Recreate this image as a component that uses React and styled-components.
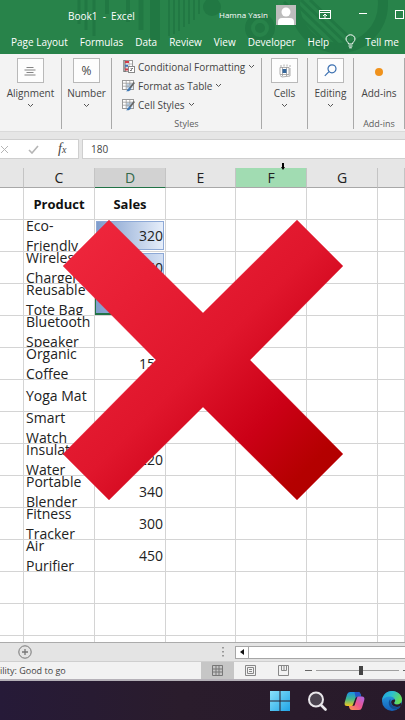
import React from "react";
import styled, { createGlobalStyle, css } from "styled-components";

const GlobalStyle = createGlobalStyle`
  * { box-sizing: border-box; }
  body { margin: 0; background: #281c2c; }
  button, input { font: inherit; color: inherit; }
  button { border: 0; padding: 0; background: none; cursor: pointer; }
  svg { display: block; flex: none; }
`;

const Page = styled.div`
  position: relative;
  display: flex;
  flex-direction: column;
  min-height: 100vh;
  overflow: hidden;
  font-family: "Open Sans", "Noto Sans", sans-serif;
  font-size: 10px;
  color: #444;
  background: #e6e6e6;
`;

/* ---------- green header ---------- */
const Header = styled.header`
  position: relative;
  background: #28834a;
  color: #fff;
`;

const Pattern = styled.svg`
  position: absolute;
  inset: 0;
`;

const TitleBar = styled.div`
  position: relative;
  display: flex;
  align-items: center;
  height: 29px;
  padding-left: 68px;
  overflow: hidden;
`;

const BookTitle = styled.h1`
  margin: 0;
  width: 151px;
  flex: none;
  font-size: 10px;
  font-weight: 400;
  line-height: 16px;
  padding-top: 2px;
  white-space: pre;
`;

const Account = styled.button`
  display: flex;
  align-items: center;
  justify-content: space-between;
  flex: none;
  width: 77px;
  font-size: 8px;
  white-space: nowrap;
`;

const WindowButtons = styled.div`
  display: flex;
  flex: none;
  gap: 25px;
  padding-left: 21px;
`;

const Tabs = styled.nav`
  position: relative;
  display: flex;
  align-items: center;
  gap: 12px;
  height: 25px;
  padding: 0 0 0 11px;
`;

const Tab = styled.button`
  display: flex;
  align-items: center;
  flex: none;
  gap: 9px;
  line-height: 16px;
  white-space: nowrap;
  &:last-child { padding-left: 4px; }
`;

/* ---------- ribbon ---------- */
const Ribbon = styled.section`
  display: flex;
  height: 78px;
  padding: 4px 0 2px;
  background: #f3f3f3;
  border-bottom: 1px solid #dadada;
  overflow: hidden;
`;

const Group = styled.div`
  position: relative;
  display: flex;
  flex-direction: column;
  align-items: center;
  flex: none;
  width: ${(p) => p.$width}px;
  border-right: 1px solid #a9a9a9;
`;

const GroupButton = styled.button`
  display: flex;
  flex-direction: column;
  align-items: center;
  gap: 3px;
  font-size: 10px;
  line-height: 14px;
  white-space: nowrap;
`;

const IconBox = styled.span`
  display: grid;
  place-items: center;
  width: 27px;
  height: 25px;
  border: 1px solid ${(p) => (p.$plain ? "transparent" : "#b9b9b9")};
  background: ${(p) => (p.$plain ? "transparent" : "#fdfdfd")};
  font-size: 12px;
`;

const StyleList = styled.div`
  display: flex;
  flex-direction: column;
  align-self: stretch;
  padding-left: 10px;
`;

const StyleButton = styled.button`
  display: flex;
  align-items: center;
  gap: 3px;
  height: 19px;
  padding-bottom: 2px;
  font-size: 10px;
  white-space: nowrap;
`;

const GroupName = styled.span`
  margin-top: auto;
  font-size: 9px;
  line-height: 10px;
  color: #5c5c5c;
`;

/* ---------- formula bar ---------- */
const FormulaBar = styled.div`
  display: flex;
  gap: 3px;
  height: 30px;
  padding: 7px 0 3px;
  background: #e6e6e6;
`;

const FormulaTools = styled.div`
  display: flex;
  align-items: center;
  gap: 19px;
  width: 79px;
  flex: none;
  background: #fff;
  border: 1px solid #cfcfcf;
  border-left: 0;
`;

const FunctionButton = styled.button`
  font-family: "Liberation Serif", serif;
  font-style: italic;
  font-size: 14px;
  line-height: 16px;
  small { font-size: 10px; }
`;

const FormulaInput = styled.input`
  flex: 1;
  min-width: 0;
  padding: 0 8px;
  border: 1px solid #cfcfcf;
  border-right: 0;
  outline: 0;
  background: #fff;
  font-size: 10px;
`;

/* ---------- sheet ---------- */
const SheetArea = styled.main`
  flex: 1;
  overflow: hidden;
  padding-top: 6px;
  background: linear-gradient(#e6e6e6 6px, #fff 6px);
  max-height: 480px;
`;

const Sheet = styled.table`
  width: 100%;
  table-layout: fixed;
  border-collapse: separate;
  border-spacing: 0;
  font-size: 14px;
  color: #222;
`;

const Col = styled.col`
  width: ${(p) => (p.$width ? p.$width + "px" : "auto")};
`;

const ColumnHead = styled.th`
  height: 20px;
  padding: 0;
  font-size: 14px;
  line-height: 18px;
  font-weight: 400;
  background: #e6e6e6;
  border-right: 1px solid #c4c4c4;
  border-bottom: 1px solid #a8a8a8;
  ${(p) => p.$state === "selected" && css`
    background: #d2d2d2;
    color: #33694a;
    border-bottom: 1px solid #217346;
  `}
  ${(p) => p.$state === "hover" && css`
    background: #a1dcb2;
  `}
`;

const Cell = styled.td`
  height: 32px;
  padding: 0;
  border-right: 1px solid #d4d4d4;
  border-bottom: 1px solid #d4d4d4;
  text-align: left;
`;

const CellBody = styled.div`
  display: flex;
  flex-direction: column;
  justify-content: center;
  height: 31px;
  padding: 0 2px;
  overflow: hidden;
  line-height: 20px;
  white-space: nowrap;
  ${(p) => p.$kind === "name" && css`align-items: flex-start;`}
  ${(p) => p.$kind === "number" && css`align-items: flex-end;`}
  ${(p) => p.$kind === "title" && css`
    align-items: center;
    font-size: 13px;
    font-weight: 700;
    color: #111;
  `}
  ${(p) => p.$bar && css`
    height: 29px;
    margin: 1px;
    padding: 0 0 0 1px;
    border: 1px solid #8ea9d6;
    background: linear-gradient(90deg, #7f9dcc, ${p.$bar});
  `}
  ${(p) => p.$last && css`
    height: 31px;
    margin: 0;
    border-left: 1px solid #217346;
    border-bottom: 2px solid #217346;
  `}
`;

/* ---------- footers ---------- */
const SheetTabs = styled.div`
  display: flex;
  align-items: center;
  height: 19px;
  padding-left: 18px;
  border-top: 1px solid #ababab;
  background: #e4e4e4;
`;

const ScrollArea = styled.div`
  display: flex;
  align-items: center;
  flex: 1;
  margin-left: 190px;
  gap: 11px;
`;

const ScrollBar = styled.div`
  display: flex;
  flex: 1;
  height: 13px;
  border: 1px solid #a6a6a6;
  border-right: 0;
  background: #fff;
`;

const ScrollButton = styled.button`
  display: grid;
  place-items: center;
  width: 13px;
  border-right: 1px solid #a6a6a6;
`;

const StatusBar = styled.div`
  display: flex;
  align-items: stretch;
  height: 20px;
  border-top: 1px solid #cfcfcf;
  border-bottom: 2px solid #b5b1b8;
  background: #f2f2f2;
  font-size: 9px;
`;

const StatusText = styled.span`
  flex: none;
  width: 201px;
  line-height: 18px;
  white-space: nowrap;
`;

const ViewButton = styled.button`
  display: grid;
  place-items: center;
  flex: none;
  width: 33px;
  background: ${(p) => (p.$active ? "#c6c6c6" : "transparent")};
`;

const ZoomControl = styled.div`
  display: flex;
  align-items: center;
  flex: 1;
  min-width: 0;
  gap: 4px;
  padding-left: 5px;
`;

const ZoomRange = styled.input`
  appearance: none;
  flex: 1;
  min-width: 0;
  height: 10px;
  margin: 0;
  background: linear-gradient(#a0a0a0, #a0a0a0) center / 100% 1px no-repeat;
  &::-webkit-slider-thumb {
    appearance: none;
    width: 4px;
    height: 9px;
    background: #444;
  }
`;

const Taskbar = styled.footer`
  display: flex;
  align-items: center;
  justify-content: flex-end;
  gap: 17px;
  height: 39px;
  padding-right: 3px;
  background: linear-gradient(90deg, #261a38, #2a1c2c 45%, #281a2a);
`;

const CrossOverlay = styled.div`
  position: absolute;
  inset: 0;
  display: grid;
  place-items: center;
  pointer-events: none;
`;

const PointerMark = styled.svg`
  position: absolute;
  right: 21px;
  top: -6px;
`;

const HeadInner = styled.div`
  position: relative;
`;

const Chevron = () => (
  <svg width="7" height="5" viewBox="0 0 7 5" fill="none" stroke="#555">
    <path d="M1 1l2.5 2.5L6 1" />
  </svg>
);

const TableIcon = ({ conditional }) => (
  <svg width="13" height="13" viewBox="0 0 13 13" fill="none">
    {conditional ? (
      <>
        <rect x="1.500" y=".5" width="9" height="11" fill="#fff" stroke="#999" />
        <path d="M7 .5v6M4 4h6.500M1.500 8h5" stroke="#aaa" strokeWidth=".8" />
        <path d="M3 .5v11.500" stroke="#666" strokeWidth="1.200" />
        <path d="M3 2h4M3 9.500h3" stroke="#d33c4a" strokeWidth="2" />
        <path d="M3 5.800h3" stroke="#4472b8" strokeWidth="2" />
        <rect x="6.500" y="6.500" width="6" height="6" fill="#fff" stroke="#888" />
        <path d="M8 11l3-3M8.500 8.500h2.500M8 10.500h2" stroke="#666" strokeWidth=".7" />
      </>
    ) : (
      <>
        <rect x=".5" y="1.500" width="11" height="9" fill="#fff" stroke="#999" />
        <path d="M4.500 4.500h6v5h-6z" fill="#b9cfe4" />
        <path d="M.5 4.200h11M.5 7.200h7M4.200 1.500v9M7.800 1.500v5" stroke="#999" strokeWidth=".8" />
        <path d="M12.300 3.500L7.500 9.500" stroke="#666" strokeWidth="1.800" />
        <path d="M7.500 8.500L9 10c-1 2.500-3 2.500-5 2.200 1.500-.7 1.500-2.700 3.500-3.700z" fill="#3e78b5" />
      </>
    )}
  </svg>
);

const columns = [
  { letter: "" },
  { letter: "C" },
  { letter: "D", state: "selected" },
  { letter: "E" },
  { letter: "F", state: "hover" },
  { letter: "G" },
  { letter: "" },
];

const rows = [
  { lines: ["Eco-", "Friendly"], sales: 320, bar: "#e6eefa" },
  { lines: ["Wireless", "Charger"], sales: 250, bar: "#d3e0f4" },
  { lines: ["Reusable", "Tote Bag"], sales: 180, bar: "#c0d0ec", last: true },
  { lines: ["Bluetooth", "Speaker"] },
  { lines: ["Organic", "Coffee"], sales: 150 },
  { lines: ["Yoga Mat"] },
  { lines: ["Smart", "Watch"] },
  { lines: ["Insulated", "Water"], sales: 220 },
  { lines: ["Portable", "Blender"], sales: 340 },
  { lines: ["Fitness", "Tracker"], sales: 300 },
  { lines: ["Air", "Purifier"], sales: 450 },
  { lines: [] },
  { lines: [] },
  { lines: [] },
];

const tabs = ["Page Layout", "Formulas", "Data", "Review", "View", "Developer", "Help"];

function TitleHeader() {
  return (
    <Header>
      <Pattern width="100%" height="54" aria-hidden="true">
        <g fill="none" stroke="#217843">
          <path d="M79 0v24M86 0v30M94 0v36" strokeWidth="3" />
          <path d="M107 0v14M128 0v22" strokeWidth="4" />
          <path d="M141 0v30" strokeWidth="5" />
          <path d="M155 0v40" strokeWidth="10" />
          <path d="M169 0v36M174 0v34M179 0v31M184 0v27M189 0v24M194 0v20M199 0v14" strokeWidth="2" />
          <circle cx="260" cy="28" r="12" strokeWidth="6" />
          <circle cx="339" cy="4" r="44" strokeWidth="10" />
          <path d="M292 0l52 50M301 0l46 44M310 0l40 38M284 2l50 48" strokeWidth="3" />
        </g>
        <circle cx="212" cy="7" r="9" fill="#217843" />
        <circle cx="260" cy="28" r="5" fill="#217843" />
      </Pattern>
      <TitleBar>
        <BookTitle>{"Book1  -  Excel"}</BookTitle>
        <Account>
          Hamna Yasin
          <svg width="20" height="20" viewBox="0 0 20 20">
            <rect width="20" height="20" fill="#bdbdbd" />
            <circle cx="10" cy="7" r="4.500" fill="#fff" />
            <path d="M2 20v-3q0-4 4-4h8q4 0 4 4v3z" fill="#fff" />
          </svg>
        </Account>
        <WindowButtons>
          <button aria-label="Ribbon display options">
            <svg width="16" height="12" viewBox="0 0 16 12" fill="none" stroke="#fff">
              <rect x="2.500" y="1.500" width="11" height="8" />
              <path d="M2.500 3.500h11M8 9V5M6 7l2-2 2 2" />
            </svg>
          </button>
          <button aria-label="Minimize">
            <svg width="10" height="12" viewBox="0 0 10 12" stroke="#fff">
              <path d="M1 4.500h8" />
            </svg>
          </button>
          <button aria-label="Maximize">
            <svg width="12" height="12" viewBox="0 0 12 12" fill="none" stroke="#fff">
              <rect x="2.500" y="1.500" width="8" height="8" />
            </svg>
          </button>
        </WindowButtons>
      </TitleBar>
      <Tabs>
        {tabs.map((t) => (
          <Tab key={t}>{t}</Tab>
        ))}
        <Tab>
          <svg width="11" height="15" viewBox="0 0 11 15" fill="none" stroke="#fff">
            <path d="M3.500 10C3.500 8 1 7.500 1 5a4.500 4.200 0 0 1 9 0c0 2.500-2.500 3-2.500 5zM3.500 12h4M4.200 13.800h2.600" />
          </svg>
          Tell me
        </Tab>
      </Tabs>
    </Header>
  );
}

function RibbonGroup({ width, label, icon }) {
  return (
    <Group $width={width}>
      <GroupButton>
        <IconBox>{icon}</IconBox>
        {label}
        <Chevron />
      </GroupButton>
    </Group>
  );
}

function RibbonPanel() {
  return (
    <Ribbon>
      <RibbonGroup
        width={62}
        label="Alignment"
        icon={
          <svg width="12" height="10" viewBox="0 0 12 10" stroke="#777">
            <path d="M2.500 1.500h7M.5 4h11M2.500 6.500h7M.5 9h11" strokeWidth=".9" />
          </svg>
        }
      />
      <RibbonGroup width={50} label="Number" icon="%" />
      <Group $width={150}>
        <StyleList>
          <StyleButton><TableIcon conditional />Conditional Formatting<Chevron /></StyleButton>
          <StyleButton><TableIcon />Format as Table<Chevron /></StyleButton>
          <StyleButton><TableIcon />Cell Styles<Chevron /></StyleButton>
        </StyleList>
        <GroupName>Styles</GroupName>
      </Group>
      <RibbonGroup
        width={46}
        label="Cells"
        icon={
          <svg width="14" height="14" viewBox="0 0 14 14" fill="none">
            <path d="M2 3.500h9v7H2zM4.500 3v9M8.500 3v9M2 11.500l2 1.500 8-1V4M3 1v2M6 .5v2M9 .5v2M12 1v2" stroke="#999" strokeWidth=".8" />
            <rect x="4.500" y="5" width="4" height="4" fill="#35679c" />
          </svg>
        }
      />
      <RibbonGroup
        width={46}
        label="Editing"
        icon={
          <svg width="13" height="13" viewBox="0 0 13 13" fill="none" stroke="#3a6fb0" strokeWidth="1.200">
            <circle cx="8" cy="4.800" r="4" />
            <path d="M5 7.600L.8 11.800" />
          </svg>
        }
      />
      <Group $width={51}>
        <GroupButton>
          <IconBox $plain>
            <svg width="10" height="10" viewBox="0 0 10 10">
              <circle cx="5" cy="6" r="4" fill="#f0921c" />
            </svg>
          </IconBox>
          Add-ins
        </GroupButton>
        <GroupName>Add-ins</GroupName>
      </Group>
    </Ribbon>
  );
}

function Grid() {
  return (
    <SheetArea>
      <Sheet>
        <colgroup>
          <Col $width={24} />
          <Col $width={71} />
          <Col $width={71} />
          <Col $width={70} />
          <Col $width={71} />
          <Col $width={71} />
          <Col />
        </colgroup>
        <thead>
          <tr>
            {columns.map((c, i) => (
              <ColumnHead key={i} $state={c.state} scope="col">
                <HeadInner>
                  {c.letter}
                  {c.state === "hover" && (
                    <PointerMark width="4" height="7" viewBox="0 0 4 7" aria-hidden="true">
                      <path d="M1 0h2v4h1L2 7 0 4h1z" fill="#000" />
                    </PointerMark>
                  )}
                </HeadInner>
              </ColumnHead>
            ))}
          </tr>
        </thead>
        <tbody>
          <tr>
            <Cell />
            <Cell as="th" scope="col"><CellBody $kind="title">Product</CellBody></Cell>
            <Cell as="th" scope="col"><CellBody $kind="title">Sales</CellBody></Cell>
            <Cell /><Cell /><Cell /><Cell />
          </tr>
          {rows.map((r, i) => (
            <tr key={i}>
              <Cell />
              <Cell>
                <CellBody $kind="name">
                  {r.lines.map((l) => <span key={l}>{l}</span>)}
                </CellBody>
              </Cell>
              <Cell>
                <CellBody $kind="number" $bar={r.bar} $last={r.last}>{r.sales && <span>{r.sales}</span>}</CellBody>
              </Cell>
              <Cell /><Cell /><Cell /><Cell />
            </tr>
          ))}
        </tbody>
      </Sheet>
    </SheetArea>
  );
}

function BottomBars() {
  return (
    <>
      <SheetTabs>
        <button aria-label="New sheet">
          <svg width="14" height="14" viewBox="0 0 14 14" fill="none" stroke="#777">
            <circle cx="7" cy="7" r="6.200" />
            <path d="M7 4v6M4 7h6" strokeWidth="1.300" />
          </svg>
        </button>
        <ScrollArea>
          <svg width="2" height="10" viewBox="0 0 2 10" fill="#999">
            <path d="M0 0h2v1.500H0zM0 4h2v1.500H0zM0 8h2v1.500H0z" />
          </svg>
          <ScrollBar>
            <ScrollButton aria-label="Scroll left">
              <svg width="4" height="6" viewBox="0 0 4 6"><path d="M4 0v6L0 3z" fill="#111" /></svg>
            </ScrollButton>
          </ScrollBar>
        </ScrollArea>
      </SheetTabs>
      <StatusBar>
        <StatusText>ility: Good to go</StatusText>
        <ViewButton $active aria-label="Normal view">
          <svg width="11" height="11" viewBox="0 0 11 11" fill="none" stroke="#777">
            <path d="M.5.5h10v10H.5zM.5 4h10M.5 7h10M4 .5v10M7 .5v10" />
          </svg>
        </ViewButton>
        <ViewButton aria-label="Page layout view">
          <svg width="11" height="11" viewBox="0 0 11 11" fill="none" stroke="#888">
            <path d="M.5.5h10v10H.5zM2.500 2.500h6v6h-6zM4 4.500h3M4 6.500h3" />
          </svg>
        </ViewButton>
        <ViewButton aria-label="Page break preview">
          <svg width="11" height="11" viewBox="0 0 11 11" fill="none" stroke="#888">
            <path d="M.5.5h10v10H.5zM3.500.5v5h5v-5M6 .5v5" />
          </svg>
        </ViewButton>
        <ZoomControl>
          <button aria-label="Zoom out">
            <svg width="7" height="7" viewBox="0 0 7 7" stroke="#666"><path d="M0 3.500h7" /></svg>
          </button>
          <ZoomRange type="range" min="0" max="100" defaultValue="55" aria-label="Zoom" />
          <button aria-label="Zoom in">
            <svg width="2" height="7" viewBox="0 0 2 7" stroke="#666"><path d="M0 3.500h2" /></svg>
          </button>
        </ZoomControl>
      </StatusBar>
      <Taskbar>
        <button aria-label="Start">
          <svg width="20" height="20" viewBox="0 0 20 20">
            <defs>
              <linearGradient id="win" x1="0" y1="0" x2="1" y2="1">
                <stop offset="0" stopColor="#8ae2fb" />
                <stop offset="1" stopColor="#1fa3e6" />
              </linearGradient>
            </defs>
            <path d="M0 0h9.500v9.500H0zM10.500 0H20v9.500h-9.500zM0 10.500h9.500V20H0zM10.500 10.500H20V20h-9.500z" fill="url(#win)" />
          </svg>
        </button>
        <button aria-label="Search">
          <svg width="20" height="20" viewBox="0 0 20 20" fill="none" stroke="#e8e6ea">
            <circle cx="9" cy="8.500" r="7" fill="#4b4450" strokeWidth="2" />
            <path d="M14 14l4.500 4.500" strokeWidth="2.600" strokeLinecap="round" />
          </svg>
        </button>
        <button aria-label="Copilot">
          <svg width="21" height="20" viewBox="0 0 21 20">
            <defs>
              <linearGradient id="cpa" x1="0" y1="0" x2="0" y2="1">
                <stop offset="0" stopColor="#1a8fe8" />
                <stop offset=".5" stopColor="#3fb88c" />
                <stop offset="1" stopColor="#f5c61d" />
              </linearGradient>
              <linearGradient id="cpb" x1="1" y1="0" x2="0" y2="1">
                <stop offset="0" stopColor="#a667e8" />
                <stop offset=".5" stopColor="#ee5590" />
                <stop offset="1" stopColor="#fb9a45" />
              </linearGradient>
            </defs>
            <path d="M6 1h8q2 0 2.500 2l.8 2.500h-3q-2 0-2.500 2l-1.600 5.500q-.6 2-2.500 2H3q-3 0-2.300-3.500L3 3.500Q3.700 1 6 1z" fill="url(#cpa)" />
            <path d="M10.500 1H14q2 0 2.500 2l.8 2.500h-3q-2 0-2.500 2z" fill="#2456c8" />
            <path d="M14.500 5.500H18q3 0 2.300 3.500L18 16.500q-.7 2.500-3 2.500H8q-2 0-2.600-2L4.800 15h2.700q2 0 2.500-2l2-5.500q.6-2 2.500-2z" fill="url(#cpb)" />
            <path d="M11.500 7l2-1.500-3 9-2 .5z" fill="#281a2a" />
          </svg>
        </button>
        <button aria-label="Edge">
          <svg width="20" height="20" viewBox="0 0 20 20">
            <defs>
              <linearGradient id="edg" x1="0" y1="0" x2="1" y2=".4">
                <stop offset="0" stopColor="#1c9de0" />
                <stop offset=".5" stopColor="#2dc0d0" />
                <stop offset="1" stopColor="#66dd58" />
              </linearGradient>
              <linearGradient id="edb" x1="0" y1="0" x2="0" y2="1">
                <stop offset="0" stopColor="#2aa6e6" />
                <stop offset="1" stopColor="#1460b8" />
              </linearGradient>
            </defs>
            <circle cx="10" cy="10" r="10" fill="url(#edb)" />
            <path d="M0 10C.3 4 4.500 0 10 0s10 4 10 8.500c0 3-2 5-4.700 5-2 0-3.300-.8-3.300-1.600 0-.6 1-1 1-2.700C13 7 10.500 5.500 7.500 5.500 4 5.500 1 7 0 10z" fill="url(#edg)" />
            <path d="M8.500 8C5.500 10 6 18 13.500 18.500c2 0 4-1 5-3-6 2.500-11-2-10-7.500z" fill="#134c92" />
            <path d="M12.900 8.500c1 2-1.200 2.800-.6 3.900.8 1.500 4.700 1.700 6.700-.6l.5 2.500c-4 3.400-9.500 1.200-10.300-2.500-.3-1.800.8-3.500 3.700-3.300z" fill="#281a2a" />
          </svg>
        </button>
      </Taskbar>
    </>
  );
}

export default function App() {
  return (
    <Page>
      <GlobalStyle />
      <TitleHeader />
      <RibbonPanel />
      <FormulaBar>
        <FormulaTools>
          <button aria-label="Cancel">
            <svg width="9" height="9" viewBox="0 0 9 9" stroke="#b5b5b5"><path d="M1 1l7 7M8 1L1 8" /></svg>
          </button>
          <button aria-label="Enter">
            <svg width="11" height="9" viewBox="0 0 11 9" fill="none" stroke="#b5b5b5" strokeWidth="1.600"><path d="M1 5l3 3 6-7" /></svg>
          </button>
          <FunctionButton aria-label="Insert function">f<small>x</small></FunctionButton>
        </FormulaTools>
        <FormulaInput aria-label="Formula bar" defaultValue="180" />
      </FormulaBar>
      <Grid />
      <BottomBars />
      <CrossOverlay>
        <svg width="282" height="282" viewBox="0 0 282 282" role="img" aria-label="Cross mark">
          <defs>
            <linearGradient id="cross" x1="0" y1="0" x2="1" y2="1">
              <stop offset="0" stopColor="#f0283e" />
              <stop offset=".5" stopColor="#e0162c" />
              <stop offset=".72" stopColor="#cb0016" />
              <stop offset=".88" stopColor="#b40000" />
              <stop offset="1" stopColor="#b00000" />
            </linearGradient>
          </defs>
          <path
            d="M47 1l94 93 94-93 46 46-93 94 93 94-46 46-94-93-94 93-46-46 93-94L1 47z"
            fill="url(#cross)"
            stroke="#e0263c"
            strokeOpacity=".3"
          />
        </svg>
      </CrossOverlay>
    </Page>
  );
}
